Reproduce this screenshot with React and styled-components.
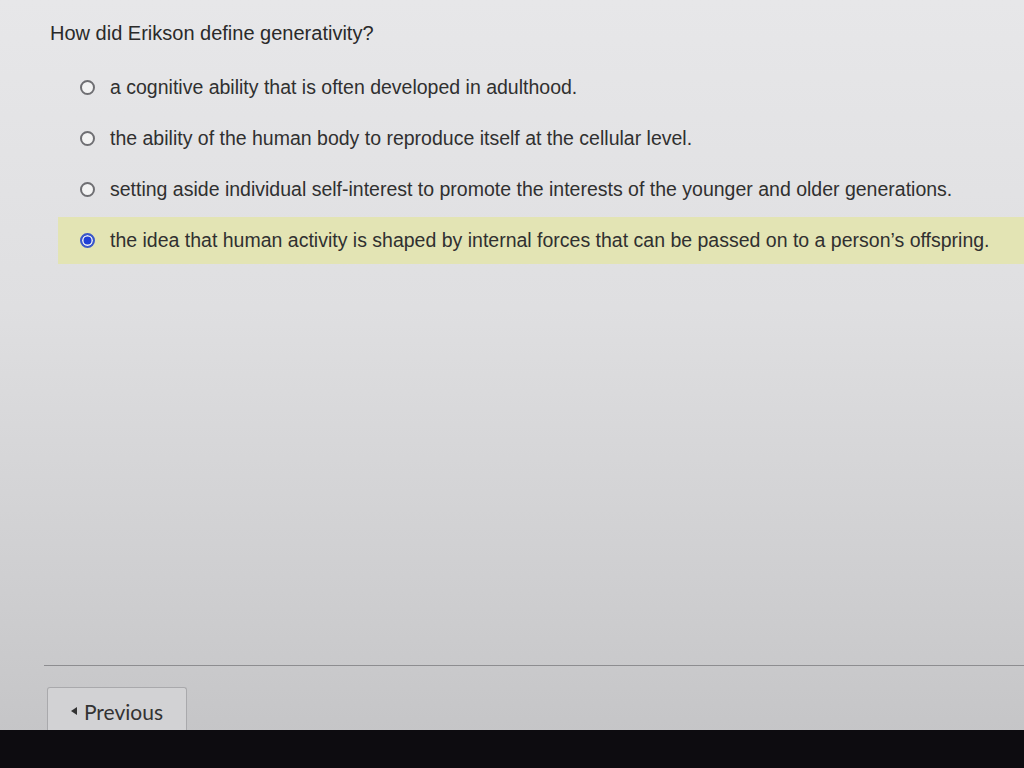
import React from "react";
import styled, { createGlobalStyle } from "styled-components";

const Global = createGlobalStyle`
  html, body { margin: 0; padding: 0; }
  body { font-family: "Liberation Sans", Arial, sans-serif; }
`;

const Page = styled.div`
  width: 1024px;
  height: 768px;
  display: flex;
  flex-direction: column;
  overflow: hidden;
  background: linear-gradient(180deg, #e7e7e9 0%, #dfdfe1 40%, #cfcfd1 75%, #c3c3c5 100%);
`;

const Content = styled.div`
  flex: 1;
  padding-top: 22px;
`;

const Question = styled.h1`
  margin: 0 0 20px 50px;
  font-size: 20px;
  line-height: 22px;
  font-weight: normal;
  color: #2a2a2a;
`;

const Options = styled.div`
  display: flex;
  flex-direction: column;
  gap: 4px;
  margin-left: 58px;
`;

const Row = styled.label`
  display: flex;
  align-items: center;
  height: 47px;
  padding-left: 22px;
  gap: 15px;
  font-size: 19.5px;
  color: #303030;
  background: ${(p) => (p.$selected ? "#e3e4b4" : "transparent")};
`;

const Radio = styled.span`
  box-sizing: border-box;
  flex: none;
  width: 15px;
  height: 15px;
  border-radius: 50%;
  border: 2px solid ${(p) => (p.$checked ? "#3a57c9" : "#6f6f73")};
  background: ${(p) => (p.$checked ? "#1f3fd6" : "#f3f3f3")};
  box-shadow: ${(p) => (p.$checked ? "inset 0 0 0 1.5px #f2f2f2" : "none")};
`;

const Separator = styled.div`
  height: 1px;
  margin-left: 44px;
  background: #8d8d90;
`;

const Footer = styled.div`
  padding: 21px 0 0 47px;
  display: flex;
`;

const Button = styled.button`
  box-sizing: border-box;
  width: 140px;
  height: 43px;
  display: flex;
  align-items: center;
  justify-content: center;
  gap: 7px;
  border: 1px solid #a9a9ac;
  border-bottom: none;
  border-radius: 3px 3px 0 0;
  background: #d2d2d4;
  color: #333;
  font-family: Lato, "Liberation Sans", sans-serif;
  font-size: 21px;
  padding: 4px 0 0 0;
`;

const Tri = styled.span`
  width: 0;
  height: 0;
  border-top: 4px solid transparent;
  border-bottom: 4px solid transparent;
  border-right: 6px solid #333;
`;

const Bezel = styled.div`
  height: 38px;
  background: #0d0c10;
`;

const options = [
  "a cognitive ability that is often developed in adulthood.",
  "the ability of the human body to reproduce itself at the cellular level.",
  "setting aside individual self-interest to promote the interests of the younger and older generations.",
  "the idea that human activity is shaped by internal forces that can be passed on to a person’s offspring.",
];

export default function App() {
  const selected = 3;
  return (
    <>
      <Global />
      <Page>
        <Content>
          <Question>How did Erikson define generativity?</Question>
          <Options>
            {options.map((o, i) => (
              <Row key={i} $selected={i === selected}>
                <Radio $checked={i === selected} />
                <span>{o}</span>
              </Row>
            ))}
          </Options>
        </Content>
        <Separator />
        <Footer>
          <Button>
            <Tri />
            Previous
          </Button>
        </Footer>
        <Bezel />
      </Page>
    </>
  );
}
